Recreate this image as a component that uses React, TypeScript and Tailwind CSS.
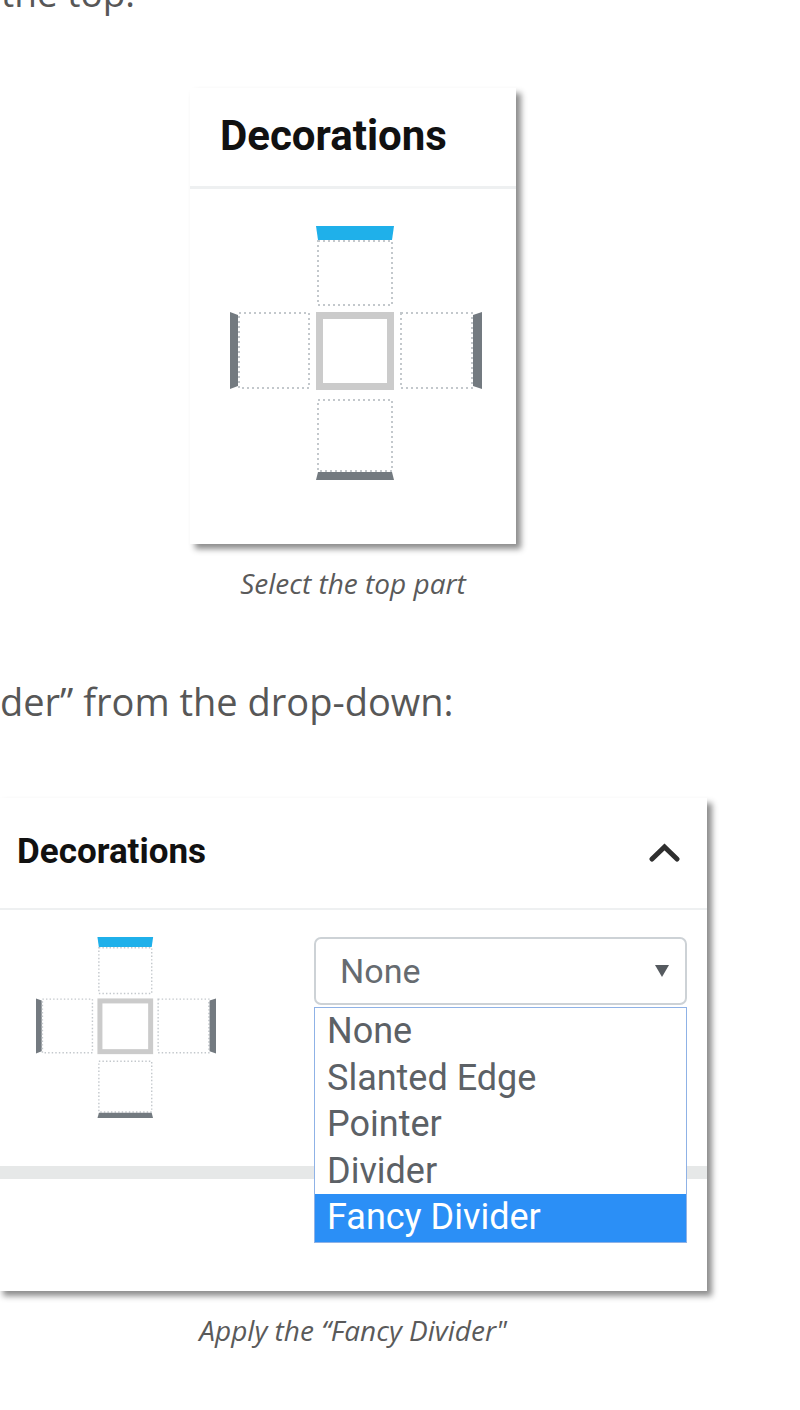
import React from "react";

const Diagram = ({ width }: { width: number }) => {
  const height = (width * 254) / 252;
  const dot = { fill: "none", stroke: "#c3c8cc", strokeWidth: 2, strokeDasharray: "2 3" };
  return (
    <svg width={width} height={height} viewBox="0 0 252 254">
      {/* top (selected) */}
      <polygon points="86,0 164,0 162,14 88,14" fill="#1fb0ea" />
      <rect x="88" y="15" width="74" height="64" {...dot} />
      {/* middle row */}
      <polygon points="0,86 8,89 8,160 0,163" fill="#737a80" />
      <rect x="9" y="87" width="70" height="75" {...dot} />
      <rect x="89.5" y="89.5" width="71" height="71" fill="none" stroke="#cbcbcb" strokeWidth="7" />
      <rect x="171" y="87" width="71" height="75" {...dot} />
      <polygon points="243,89 252,86 252,163 243,160" fill="#737a80" />
      {/* bottom */}
      <rect x="88" y="174" width="74" height="71" {...dot} />
      <polygon points="88,246 162,246 164,254 86,254" fill="#737a80" />
    </svg>
  );
};

const options = ["None", "Slanted Edge", "Pointer", "Divider", "Fancy Divider"];

export default function App() {
  return (
    <div className="w-[800px] h-[1410px] overflow-hidden bg-white font-['Open_Sans',sans-serif]">
      <p className="-mt-[26px] ml-[1px] text-[37px] leading-[37px] text-[#575757] whitespace-nowrap">
        the top.
      </p>

      <div className="w-[706px] flex flex-col items-center">
        {/* figure 1 */}
        <div className="mt-[77px] w-[326px] h-[456px] bg-white shadow-[5px_5px_6px_rgba(0,0,0,0.45)] font-['Roboto',sans-serif]">
          <div className="h-[101px] pt-[27px] pl-[30px] border-b-[3px] border-[#eef0f1]">
            <h3 className="text-[42px] leading-[42px] font-bold text-[#111]">Decorations</h3>
          </div>
          <div className="mt-[37px] ml-[40px]">
            <Diagram width={252} />
          </div>
        </div>
        <p className="mt-[25px] text-[28px] leading-[28px] italic text-[#5a5a5a]">Select the top part</p>
      </div>

      <p className="mt-[85px] text-[38px] leading-[38px] text-[#575757] whitespace-nowrap">
        der” from the drop-down:
      </p>

      {/* figure 2 */}
      <div className="mt-[78px] -ml-[2px] w-[709px] h-[493px] bg-white shadow-[5px_5px_6px_rgba(0,0,0,0.45)] font-['Roboto',sans-serif]">
        <div className="h-[112px] pt-[36px] pl-[19px] pr-[27px] flex justify-between items-start border-b-2 border-[#eef0f1]">
          <h3 className="text-[35px] leading-[35px] font-bold text-[#111]">Decorations</h3>
          <svg width="31" height="21" viewBox="0 0 31 21" className="mt-[8px]">
            <polyline points="3,17 15.5,5 28,17" fill="none" stroke="#2e2e2e" strokeWidth="5" strokeLinecap="round" />
          </svg>
        </div>
        <div className="h-[256px] flex items-start pt-[27px]">
          <div className="ml-[38px]">
            <Diagram width={180} />
          </div>
          <div className="relative ml-[98px] w-[373px]">
            <div className="h-[68px] rounded-[7px] border-2 border-[#cdd2d6] flex items-center justify-between pl-[24px] pr-[16px]">
              <span className="text-[34px] leading-[34px] text-[#666b70]">None</span>
              <svg width="14" height="12" viewBox="0 0 14 12">
                <polygon points="0,0 14,0 7,12" fill="#555a5f" />
              </svg>
            </div>
            <ul className="absolute left-0 top-[70px] w-[373px] bg-white border border-[#8fb2e6]">
              {options.map((o) => (
                <li
                  key={o}
                  className={
                    o === "Fancy Divider"
                      ? "pl-[12px] h-[48px] text-[36px] leading-[46px] bg-[#2b8ff6] text-white"
                      : "pl-[12px] h-[46.5px] text-[36px] leading-[46.5px] text-[#5c6166]"
                  }
                >
                  {o}
                </li>
              ))}
            </ul>
          </div>
        </div>
        <div className="h-[13px] bg-[#e6e8e8]" />
      </div>
      <p className="w-[706px] mt-[25px] text-center text-[28px] leading-[28px] italic text-[#5a5a5a]">
        Apply the “Fancy Divider"
      </p>
    </div>
  );
}
